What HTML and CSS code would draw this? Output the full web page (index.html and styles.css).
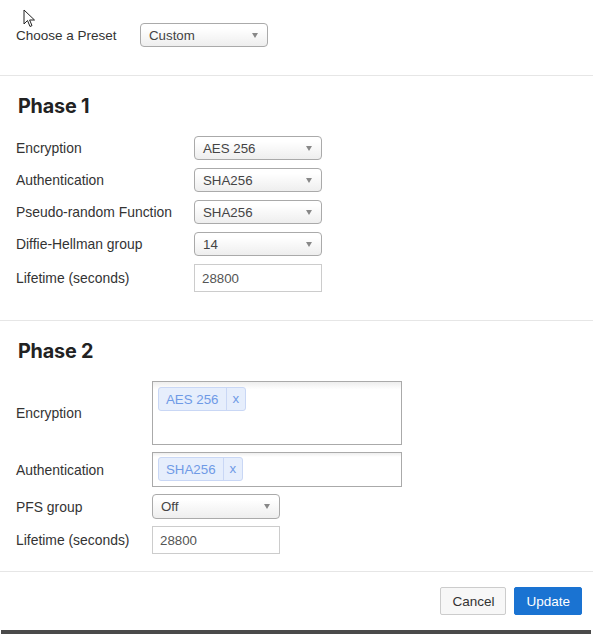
FILE: index.html
```html
<!DOCTYPE html>
<html lang="en">
<head>
    <meta charset="UTF-8">
    <meta name="viewport" content="width=device-width, initial-scale=1.0">
    <title>IPsec Policy</title>
    <link rel="stylesheet" href="styles.css">
</head>
<body>
    <div class="dialog">
        <!-- preset -->
        <div class="section preset">
            <div class="row">
                <span class="label preset-label">Choose a Preset</span>
                <div class="select">Custom</div>
            </div>
        </div>

        <div class="section">
            <h2 class="title">Phase 1</h2>
            <div class="rows">
                <div class="row">
                    <span class="label wide">Encryption</span>
                    <div class="select">AES 256</div>
                </div>
                <div class="row">
                    <span class="label wide">Authentication</span>
                    <div class="select">SHA256</div>
                </div>
                <div class="row">
                    <span class="label wide">Pseudo-random Function</span>
                    <div class="select">SHA256</div>
                </div>
                <div class="row">
                    <span class="label wide">Diffie-Hellman group</span>
                    <div class="select">14</div>
                </div>
                <div class="row">
                    <span class="label wide">Lifetime (seconds)</span>
                    <div class="input">28800</div>
                </div>
            </div>
        </div>

        <div class="section last">
            <h2 class="title">Phase 2</h2>
            <div class="rows">
                <div class="row">
                    <span class="label">Encryption</span>
                    <div class="multi tall">
                        <span class="tag">AES 256<span class="tag-x">x</span></span>
                    </div>
                </div>
                <div class="row">
                    <span class="label">Authentication</span>
                    <div class="multi">
                        <span class="tag">SHA256<span class="tag-x">x</span></span>
                    </div>
                </div>
                <div class="row">
                    <span class="label">PFS group</span>
                    <div class="select">Off</div>
                </div>
                <div class="row">
                    <span class="label">Lifetime (seconds)</span>
                    <div class="input">28800</div>
                </div>
            </div>
        </div>

        <div class="footer">
            <button class="btn">Cancel</button>
            <button class="btn primary">Update</button>
        </div>
    </div>
    <div class="bottom-bar"></div>

    <!-- puntatore del mouse -->
    <svg class="cursor" width="13" height="19" viewBox="0 0 13 19">
        <path d="M1 1 L1 15 L4.5 11.5 L7 17.5 L9 16.6 L6.6 11 L11.5 11 Z" fill="#fff" stroke="#222" stroke-width="1" stroke-linejoin="round"/>
    </svg>
</body>
</html>
```

FILE: styles.css
```css
body {
    margin: 0;
    background-color: white;
    font-family: "Liberation Sans", Arial, sans-serif;
    font-size: 13px;
    color: #333;
    position: relative;
    width: 593px;
    height: 634px;
    overflow: hidden;
}
.dialog {
    width: 593px;
    height: 630px;
    display: flex;
    flex-direction: column;
}
.section {
    padding: 16px 16px 28px 16px;
    border-bottom: 1px solid #e6e6e6;
}
.section.preset {
    padding-top: 23px;
    padding-bottom: 28px;
}
.section.last {
    padding-bottom: 17px;
}
.title {
    margin: 0 0 16px 2px;
    font-family: Inter, "Noto Sans", sans-serif;
    font-size: 19.8px;
    font-weight: 700;
    line-height: 28px;
    color: #222;
    letter-spacing: -0.2px;
}
.rows {
    display: flex;
    flex-direction: column;
    gap: 8px;
}
.section.last .rows {
    gap: 7px;
}
.row {
    display: flex;
    align-items: center;
}
.label {
    width: 136px;
    font-size: 13.9px;
    color: #333;
}
.label.wide {
    width: 178px;
}
.preset-label {
    width: 124px;
    font-size: 13.5px;
}
.select {
    position: relative;
    box-sizing: border-box;
    width: 128px;
    height: 24px;
    line-height: 24px;
    padding-left: 8px;
    border: 1px solid #aaa;
    border-radius: 4px;
    background: linear-gradient(to bottom, #ffffff 20%, #eeeeee 100%);
    color: #444;
    font-size: 13.3px;
}
.section.last .select {
    height: 25px;
}
.select::after {
    content: "";
    position: absolute;
    right: 9px;
    top: 9px;
    border-left: 3.5px solid transparent;
    border-right: 3.5px solid transparent;
    border-top: 5px solid #888;
}
.input {
    box-sizing: border-box;
    width: 128px;
    height: 28px;
    line-height: 27px;
    padding-left: 7px;
    border: 1px solid #ccc;
    color: #555;
    font-size: 13.3px;
}
.multi {
    box-sizing: border-box;
    width: 250px;
    height: 35px;
    padding: 4px 5px;
    border: 1px solid #aaa;
    background: linear-gradient(to bottom, #eeeeee 0%, #ffffff 12%);
}
.multi.tall {
    height: 64px;
    padding-top: 5px;
}
.tag {
    display: inline-flex;
    align-items: center;
    height: 24px;
    box-sizing: border-box;
    padding-left: 7px;
    border: 1px solid #c9d7f5;
    border-radius: 3px;
    background-color: #e6eefc;
    color: #6f9ae6;
    font-size: 13.3px;
}
.tag-x {
    margin-left: 7px;
    padding: 0 6px;
    height: 100%;
    line-height: 22px;
    border-left: 1px solid #c9d7f5;
}
.footer {
    display: flex;
    justify-content: flex-end;
    gap: 8px;
    padding: 15px 11px 0 0;
}
.btn {
    height: 28px;
    padding: 0 11px;
    font-family: "Liberation Sans", Arial, sans-serif;
    font-size: 13.5px;
    border: 1px solid #ccc;
    border-radius: 2px;
    background-color: #f7f7f7;
    color: #333;
}
.btn.primary {
    padding: 0 11px;
    border-color: #1a73d2;
    background-color: #1a73d2;
    color: white;
}
.bottom-bar {
    height: 4px;
    margin-left: 1px;
    width: 590px;
    background-color: #4a4a4a;
}
.cursor {
    position: absolute;
    left: 23px;
    top: 9px;
}
```
